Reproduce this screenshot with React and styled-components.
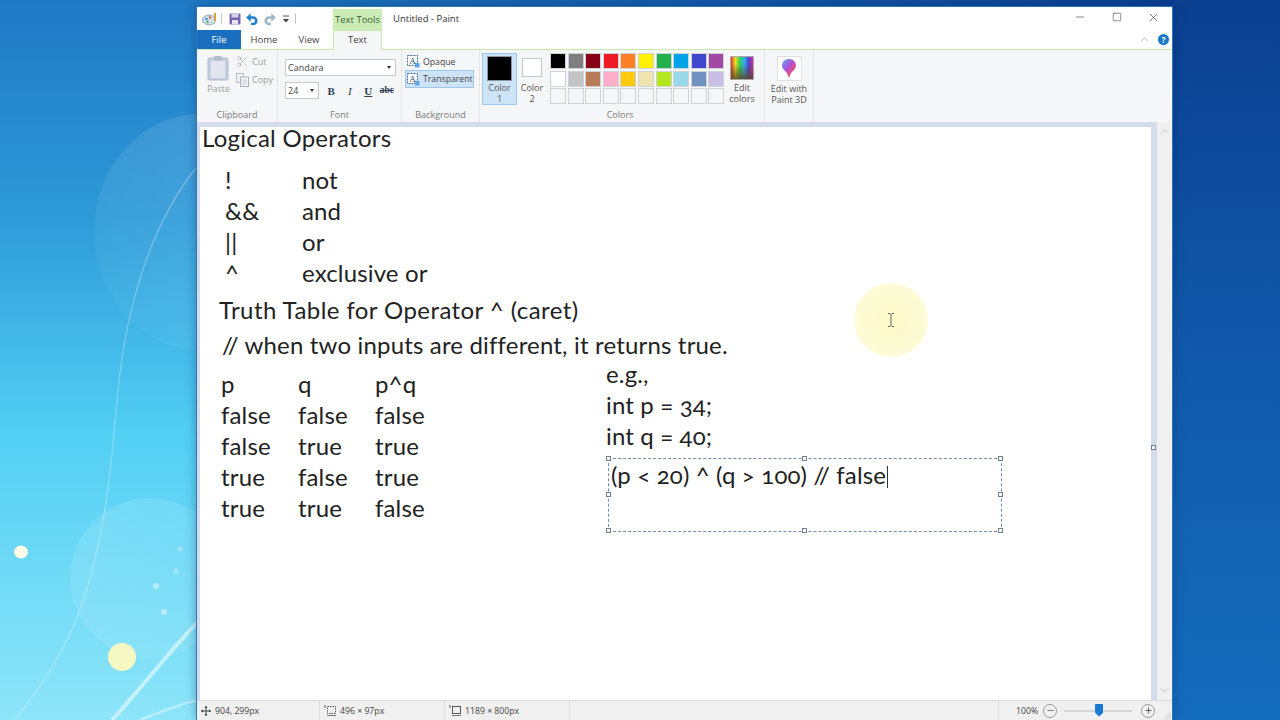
import React from "react";
import styled, { createGlobalStyle } from "styled-components";
import { ChevronDown, ChevronUp, Minus, Plus, Scissors, Square, X } from "lucide-react";

const GlobalStyle = createGlobalStyle`
  html, body {
    margin: 0;
    padding: 0;
    height: 100%;
    overflow: hidden;
  }
  body {
    font-family: "Open Sans", "Liberation Sans", sans-serif;
    color: #3c3c3c;
  }
`;

const row1 = ["#000000", "#7f7f7f", "#880015", "#ed1c24", "#ff7f27", "#fff200", "#22b14c", "#00a2e8", "#3f48cc", "#a349a4"];
const row2 = ["#ffffff", "#c3c3c3", "#b97a57", "#ffaec9", "#ffc90e", "#efe4b0", "#b5e61d", "#99d9ea", "#7092be", "#c8bfe7"];
const row3 = Array(10).fill("transparent");

const truthRows = [
  ["p", "q", "p^q"],
  ["false", "false", "false"],
  ["false", "true", "true"],
  ["true", "false", "true"],
  ["true", "true", "false"],
];

const operators = [
  ["!", "not"],
  ["&&", "and"],
  ["||", "or"],
  ["^", "exclusive or"],
];

const handles = [
  [0, 0], [50, 0], [100, 0],
  [0, 50], [100, 50],
  [0, 100], [50, 100], [100, 100],
];

export default function App() {
  return (
    <Desktop>
      <GlobalStyle />
      <Wallpaper />
      <Window>
        <TitleRow>
          <QuickBar>
            <PaintLogo />
            <QuickSep />
            <SaveIcon />
            <ArrowIcon color="#1f7fd0" />
            <ArrowIcon color="#9db4c8" flip />
            <DropIcon />
            <QuickSep $end />
          </QuickBar>
          <ContextTab>Text Tools</ContextTab>
          <DocTitle>Untitled - Paint</DocTitle>
          <WinButtons>
            <WinButton><Minus size={12} strokeWidth={1.2} /></WinButton>
            <WinButton><Square size={10} strokeWidth={1.3} /></WinButton>
            <WinButton><X size={13} strokeWidth={1.2} /></WinButton>
          </WinButtons>
        </TitleRow>

        <TabRow>
          <FileTab>File</FileTab>
          <Tab $w={46}>Home</Tab>
          <Tab $w={44}>View</Tab>
          <ActiveTab>Text</ActiveTab>
          <TabEnd>
            <ChevronUp size={13} strokeWidth={1.3} color="#9a9a9a" />
            <HelpDot>?</HelpDot>
          </TabEnd>
        </TabRow>

        <Ribbon>
          <Group $w={81}>
            <GroupBody>
              <PasteButton>
                <PasteIcon />
                <Faded>Paste</Faded>
              </PasteButton>
              <ClipColumn>
                <ClipItem><Scissors size={13} strokeWidth={1.2} color="#a8a8a8" /><Faded>Cut</Faded></ClipItem>
                <ClipItem><CopyIcon /><Faded>Copy</Faded></ClipItem>
              </ClipColumn>
            </GroupBody>
            <GroupLabel>Clipboard</GroupLabel>
          </Group>

          <Group $w={124}>
            <FontBody>
              <FontSelect $w={111}>Candara<Caret /></FontSelect>
              <FontRow>
                <FontSelect $w={34}>24<Caret /></FontSelect>
                <FontToggles>
                  <Toggle $bold>B</Toggle>
                  <Toggle $italic>I</Toggle>
                  <Toggle $under>U</Toggle>
                  <Toggle $strike>abc</Toggle>
                </FontToggles>
              </FontRow>
            </FontBody>
            <GroupLabel>Font</GroupLabel>
          </Group>

          <Group $w={78}>
            <BackgroundBody>
              <BackItem><BackIcon />Opaque</BackItem>
              <BackItem $active><BackIcon />Transparent</BackItem>
            </BackgroundBody>
            <GroupLabel>Background</GroupLabel>
          </Group>

          <Group $w={285}>
            <ColorsBody>
              <ColorButton $active>
                <BigSwatch $c="#000" />
                <small>Color<br />1</small>
              </ColorButton>
              <ColorButton>
                <MidSwatch $c="#fff" />
                <small>Color<br />2</small>
              </ColorButton>
              <Palette>
                {[...row1, ...row2, ...row3].map((c, i) => (
                  <PaletteCell key={i} $c={c} />
                ))}
              </Palette>
              <EditColors>
                <RainbowSwatch />
                <small>Edit<br />colors</small>
              </EditColors>
            </ColorsBody>
            <GroupLabel $shift={4}>Colors</GroupLabel>
          </Group>

          <Group $w={49}>
            <Paint3D>
              <DropTile>
                <svg width="16" height="22" viewBox="0 0 16 22">
                  <defs>
                    <linearGradient id="dropFill" x1="0" y1="0" x2="1" y2="1">
                      <stop offset="0" stopColor="#5aa9f0" />
                      <stop offset="0.45" stopColor="#b050d8" />
                      <stop offset="0.75" stopColor="#f0506a" />
                      <stop offset="1" stopColor="#f8b020" />
                    </linearGradient>
                  </defs>
                  <path d="M8 1C3.6 1 1 4.2 1 7.6c0 3.8 3.6 5.2 5.4 8.4L8 20l1.6-4c1.8-3.2 5.4-4.6 5.4-8.4C15 4.2 12.4 1 8 1z" fill="url(#dropFill)" />
                </svg>
              </DropTile>
              <small>Edit with<br />Paint 3D</small>
            </Paint3D>
          </Group>
        </Ribbon>

        <Workspace>
          <Canvas>
            <Block $x={2} $y={-5} $track={0.25}>Logical Operators</Block>

            <Block $x={25} $y={37}>
              {operators.map(([sym, word]) => (
                <OperatorRow key={word}>
                  <span>{sym}</span>
                  <span>{word}</span>
                </OperatorRow>
              ))}
            </Block>

            <Block $x={19} $y={167} $track={0.42}>Truth Table for Operator ^ (caret)</Block>
            <Block $x={22} $y={202} $track={0.17}>// when two inputs are different, it returns true.</Block>

            <Block $x={21} $y={241}>
              {truthRows.map((r, i) => (
                <TruthRow key={i}>
                  {r.map((cell, j) => <span key={j}>{cell}</span>)}
                </TruthRow>
              ))}
            </Block>

            <Block $x={406} $y={231}>
              <div>e.g.,</div>
              <div>int p = 34;</div>
              <div>int q = 40;</div>
            </Block>

            <Selection>
              <SelectionText>(p &lt; 20) ^ (q &gt; 100) // false<TextCaret /></SelectionText>
              {handles.map(([x, y]) => (
                <Handle key={`${x}-${y}`} $x={x} $y={y} />
              ))}
            </Selection>

            <CursorHalo>
              <svg width="8" height="14" viewBox="0 0 8 14">
                <path d="M1 .5h2l1 1 1-1h2M4 1.5v11M1 13.5h2l1-1 1 1h2" fill="none" stroke="#666" strokeWidth="1" />
              </svg>
            </CursorHalo>
            <ResizeHandle />
          </Canvas>
          <Scrollbar>
            <ChevronUp size={13} strokeWidth={1.3} color="#b5b5b5" />
            <ChevronDown size={13} strokeWidth={1.3} color="#b5b5b5" />
          </Scrollbar>
        </Workspace>

        <StatusBar>
          <StatusCell $w={123}><MoveIcon />904, 299px</StatusCell>
          <StatusCell $w={125}><SelectIcon $dashed />496 × 97px</StatusCell>
          <StatusCell $w={125}><SelectIcon />1189 × 800px</StatusCell>
          <StatusGap />
          <ZoomCell>
            <span>100%</span>
            <ZoomRound><Minus size={9} strokeWidth={2} /></ZoomRound>
            <ZoomTrack><ZoomThumb /></ZoomTrack>
            <ZoomRound><Plus size={9} strokeWidth={2.4} /></ZoomRound>
            <GripIcon />
          </ZoomCell>
        </StatusBar>
      </Window>
    </Desktop>
  );
}

function Wallpaper() {
  return (
    <WallpaperSvg viewBox="0 0 1280 720" preserveAspectRatio="none">
      <defs>
        <linearGradient id="skyLeft" x1="0" y1="0" x2="0" y2="1">
          <stop offset="0" stopColor="#1f78c4" />
          <stop offset="0.3" stopColor="#2d9ad8" />
          <stop offset="0.6" stopColor="#52cff4" />
          <stop offset="1" stopColor="#8de5f9" />
        </linearGradient>
        <linearGradient id="skyRight" x1="0" y1="0" x2="0" y2="1">
          <stop offset="0" stopColor="#0b3f90" />
          <stop offset="0.5" stopColor="#1159ab" />
          <stop offset="1" stopColor="#146cbc" />
        </linearGradient>
        <linearGradient id="skyTop" x1="0" y1="0" x2="1" y2="0">
          <stop offset="0" stopColor="#1f78c4" />
          <stop offset="1" stopColor="#0b3f90" />
        </linearGradient>
        <linearGradient id="bubble" x1="1" y1="0" x2="0" y2="1">
          <stop offset="0" stopColor="#fff" stopOpacity="0.15" />
          <stop offset="0.7" stopColor="#fff" stopOpacity="0.06" />
          <stop offset="1" stopColor="#fff" stopOpacity="0" />
        </linearGradient>
        <linearGradient id="bubbleLow" x1="0" y1="0" x2="1" y2="1">
          <stop offset="0" stopColor="#fff" stopOpacity="0.13" />
          <stop offset="1" stopColor="#fff" stopOpacity="0.05" />
        </linearGradient>
      </defs>
      <rect x="0" y="0" width="640" height="720" fill="url(#skyLeft)" />
      <rect x="640" y="0" width="640" height="720" fill="url(#skyRight)" />
      <rect x="196" y="0" width="977" height="8" fill="url(#skyTop)" />
      <ellipse cx="200" cy="232" rx="106" ry="118" fill="url(#bubble)" />
      <circle cx="150" cy="578" r="80" fill="url(#bubbleLow)" />
      <path d="M196 168C150 225 125 310 117 400C111 470 105 540 80 610C65 650 40 690 14 720" fill="none" stroke="#fff" strokeOpacity="0.3" strokeWidth="1.2" />
      <path d="M112 720C140 690 170 650 198 622" fill="none" stroke="#fff" strokeOpacity="0.5" strokeWidth="4" />
      <path d="M140 720C160 712 180 704 198 700" fill="none" stroke="#fff" strokeOpacity="0.4" strokeWidth="2.5" />
      <ellipse cx="21" cy="552" rx="7" ry="6.5" fill="#fdfde8" />
      <ellipse cx="122" cy="657" rx="14" ry="14" fill="#f6f8c4" />
      <circle cx="180" cy="549" r="2.5" fill="#fff" fillOpacity="0.3" />
      <circle cx="176" cy="571" r="2.5" fill="#fff" fillOpacity="0.3" />
      <circle cx="156" cy="586" r="3" fill="#fff" fillOpacity="0.45" />
      <circle cx="164" cy="612" r="3" fill="#fff" fillOpacity="0.45" />
    </WallpaperSvg>
  );
}

function PaintLogo() {
  return (
    <svg width="16" height="14" viewBox="0 0 16 14">
      <ellipse cx="7" cy="8" rx="6.5" ry="5" fill="#cfe0ea" stroke="#7d95a8" strokeWidth="0.8" />
      <circle cx="4.5" cy="7" r="1.3" fill="#3a8fd8" />
      <circle cx="8" cy="5.5" r="1.2" fill="#e85a3a" />
      <circle cx="5.5" cy="10" r="1.2" fill="#5ab04a" />
      <path d="M13 1v8" stroke="#d8a040" strokeWidth="2" />
    </svg>
  );
}

function SaveIcon() {
  return (
    <svg width="12" height="12" viewBox="0 0 12 12">
      <rect x="0.5" y="0.5" width="11" height="11" rx="1" fill="#7a64b0" />
      <rect x="2.5" y="0.5" width="7" height="4" fill="#d8d2e8" />
      <rect x="3" y="7" width="6" height="4.5" fill="#e6e2f0" />
    </svg>
  );
}

function ArrowIcon({ color, flip }) {
  return (
    <ArrowSvg width="12" height="12" viewBox="0 0 12 12" $flip={flip}>
      <path d="M2 4.5h5a3.2 3.2 0 0 1 0 6.5H5" fill="none" stroke={color} strokeWidth="2.6" />
      <path d="M4.6 .2 .2 4.5l4.4 4.3z" fill={color} />
    </ArrowSvg>
  );
}

function DropIcon() {
  return (
    <svg width="8" height="8" viewBox="0 0 8 8">
      <path d="M1 1h6" stroke="#555" strokeWidth="1" />
      <path d="M1 4h6L4 7.5z" fill="#444" />
    </svg>
  );
}

function PasteIcon() {
  return (
    <svg width="22" height="26" viewBox="0 0 22 26">
      <rect x="1" y="3" width="20" height="22" rx="1.5" fill="#c4cfe0" stroke="#aeb9cc" />
      <rect x="4" y="6" width="14" height="17" fill="#e3e6ee" />
      <rect x="7" y="1" width="8" height="5" rx="1" fill="#b4bfd2" />
    </svg>
  );
}

function CopyIcon() {
  return (
    <svg width="13" height="14" viewBox="0 0 13 14">
      <rect x="0.5" y="0.5" width="7" height="9" fill="#eef0f4" stroke="#b8c0cc" />
      <rect x="4.5" y="4" width="8" height="9.5" fill="#f4f5f8" stroke="#a8b2c0" />
      <path d="M6 7h5M6 9h5M6 11h5" stroke="#bcc4d0" strokeWidth="0.8" />
    </svg>
  );
}

function BackIcon() {
  return (
    <svg width="13" height="13" viewBox="0 0 13 13">
      <rect x="0.5" y="0.5" width="10" height="10" fill="#fff" stroke="#4a6d94" strokeDasharray="2 1" />
      <rect x="8" y="8" width="4.5" height="4.5" fill="#5aa8e8" />
      <text x="5.5" y="8.6" fontSize="9" fontFamily="Liberation Serif, serif" textAnchor="middle" fill="#2b4a6b">A</text>
    </svg>
  );
}

function MoveIcon() {
  return (
    <svg width="10" height="10" viewBox="0 0 10 10">
      <path d="M5 0v10M0 5h10" stroke="#444" strokeWidth="1" />
      <path d="M5 0 3.5 2h3zM5 10 3.5 8h3zM0 5l2-1.5v3zM10 5 8 3.5v3z" fill="#444" />
    </svg>
  );
}

function SelectIcon({ $dashed }) {
  return (
    <svg width="12" height="11" viewBox="0 0 12 11">
      <path d="M1 0v3" stroke="#555" strokeWidth="1" />
      <rect x="3.5" y="1.5" width="8" height="7" fill="none" stroke="#555" strokeWidth="1" strokeDasharray={$dashed ? "1.5 1" : "none"} />
      <path d="M3 10.5h9" stroke="#777" strokeWidth="1" />
    </svg>
  );
}

function GripIcon() {
  return (
    <GripSvg width="8" height="8" viewBox="0 0 8 8">
      <path d="M7 1v1M5 3v1M7 3v1M3 5v1M5 5v1M7 5v1M1 7v1M3 7v1M5 7v1M7 7v1" stroke="#b8b8b8" strokeWidth="1" />
    </GripSvg>
  );
}

const Desktop = styled.div`
  position: relative;
  width: 1280px;
  height: 720px;
  overflow: hidden;
  padding: 6px 0 0 196px;
  box-sizing: border-box;
  background: #1c6fb8;
`;

const WallpaperSvg = styled.svg`
  position: absolute;
  inset: 0;
  width: 1280px;
  height: 720px;
`;

const Window = styled.div`
  position: relative;
  width: 977px;
  height: 714px;
  box-sizing: border-box;
  border: 1px solid #2f78b8;
  border-bottom: 0;
  background: #fff;
  display: flex;
  flex-direction: column;
  box-shadow: 0 0 10px rgba(0, 30, 80, 0.35);
`;

const TitleRow = styled.div`
  height: 23px;
  display: flex;
  align-items: flex-end;
  flex: none;
`;

const QuickBar = styled.div`
  width: 136px;
  height: 23px;
  padding-left: 5px;
  box-sizing: border-box;
  display: flex;
  align-items: center;
  gap: 5px;
`;

const QuickSep = styled.i`
  width: 1px;
  height: 11px;
  margin: ${(p) => (p.$end ? "0" : "0 2px 0 -2px")};
  background: #c4c4c4;
`;

const ArrowSvg = styled.svg`
  margin-right: 1px;
  transform: ${(p) => (p.$flip ? "scaleX(-1)" : "none")};
`;

const ContextTab = styled.div`
  width: 49px;
  height: 21px;
  background: #c9edb4;
  font-size: 9.5px;
  line-height: 22px;
  text-align: center;
  color: #40603a;
`;

const DocTitle = styled.div`
  margin-left: 11px;
  height: 23px;
  font-size: 9.5px;
  line-height: 23px;
  color: #333;
`;

const WinButtons = styled.div`
  margin-left: auto;
  height: 23px;
  display: flex;
  align-items: flex-start;
`;

const WinButton = styled.div`
  width: 37px;
  height: 20px;
  display: flex;
  align-items: center;
  justify-content: center;
  color: #333;
`;

const TabRow = styled.div`
  height: 20px;
  flex: none;
  display: flex;
  box-sizing: border-box;
  border-bottom: 1px solid #c8e8ae;
`;

const FileTab = styled.div`
  width: 44px;
  height: 19px;
  background: #1a6ec0;
  color: #fff;
  font-size: 9.5px;
  line-height: 19px;
  text-align: center;
`;

const Tab = styled.div`
  width: ${(p) => p.$w}px;
  font-size: 9.5px;
  line-height: 19px;
  text-align: center;
  color: #444;
`;

const ActiveTab = styled.div`
  width: 49px;
  height: 20px;
  box-sizing: border-box;
  margin-left: 2px;
  background: #f5f6f7;
  border: 1px solid #c8e8ae;
  border-bottom: 0;
  font-size: 9.5px;
  line-height: 18px;
  text-align: center;
  color: #444;
`;

const TabEnd = styled.div`
  margin-left: auto;
  display: flex;
  align-items: center;
  gap: 7px;
  padding-right: 3px;
`;

const HelpDot = styled.div`
  width: 11px;
  height: 11px;
  border-radius: 50%;
  background: #1a78c8;
  color: #fff;
  font-size: 8.5px;
  font-weight: 700;
  line-height: 11px;
  text-align: center;
`;

const Ribbon = styled.div`
  height: 72px;
  flex: none;
  display: flex;
  background: #f5f6f7;
`;

const Group = styled.div`
  width: ${(p) => p.$w}px;
  box-sizing: border-box;
  border-right: 1px solid #e4e5e7;
  display: flex;
  flex-direction: column;
`;

const GroupBody = styled.div`
  flex: 1;
  display: flex;
  padding: 5px 0 0 10px;
  gap: 6px;
`;

const GroupLabel = styled.div`
  height: 16px;
  padding-right: ${(p) => p.$shift || 0}px;
  font-size: 9px;
  line-height: 18px;
  text-align: center;
  color: #7a7a7a;
`;

const Faded = styled.span`
  color: #a0a0a0;
  font-size: 9px;
`;

const PasteButton = styled.div`
  display: flex;
  flex-direction: column;
  align-items: center;
  gap: 1px;
`;

const ClipColumn = styled.div`
  display: flex;
  flex-direction: column;
  gap: 3px;
  margin-top: -1px;
`;

const ClipItem = styled.div`
  height: 15px;
  display: flex;
  align-items: center;
  gap: 3px;
`;

const FontBody = styled.div`
  flex: 1;
  display: flex;
  flex-direction: column;
  gap: 6px;
  padding: 9px 0 0 7px;
`;

const FontRow = styled.div`
  display: flex;
  align-items: center;
`;

const FontSelect = styled.div`
  position: relative;
  width: ${(p) => p.$w}px;
  height: 17px;
  box-sizing: border-box;
  border: 1px solid #c9c9c9;
  background: #fff;
  padding-left: 2px;
  font-size: 9px;
  line-height: 15px;
  color: #444;
`;

const Caret = styled.i`
  position: absolute;
  right: 4px;
  top: 6px;
  border: 2.5px solid transparent;
  border-top: 3px solid #333;
  border-bottom: 0;
`;

const FontToggles = styled.div`
  display: flex;
  margin-left: 3px;
`;

const Toggle = styled.div`
  width: 18.5px;
  text-align: center;
  font-family: "Liberation Serif", serif;
  font-size: ${(p) => (p.$strike ? "9.5px" : "11px")};
  font-weight: ${(p) => (p.$italic ? 400 : 700)};
  font-style: ${(p) => (p.$italic ? "italic" : "normal")};
  text-decoration: ${(p) => (p.$under ? "underline" : p.$strike ? "line-through" : "none")};
  color: #2f3f55;
`;

const BackgroundBody = styled.div`
  flex: 1;
  padding: 3px 0 0 3px;
  display: flex;
  flex-direction: column;
`;

const BackItem = styled.div`
  width: 69px;
  height: ${(p) => (p.$active ? 18 : 17)}px;
  box-sizing: border-box;
  padding-left: 1px;
  display: flex;
  align-items: center;
  gap: 3px;
  font-size: 8.7px;
  color: #444;
  background: ${(p) => (p.$active ? "#cde4f7" : "transparent")};
  border: 1px solid ${(p) => (p.$active ? "#9cc8ec" : "transparent")};
`;

const ColorsBody = styled.div`
  flex: 1;
  display: flex;
  padding: 3px 0 0 2px;

  small {
    font-size: 9px;
    line-height: 11px;
    text-align: center;
    color: #555;
  }
`;

const ColorButton = styled.div`
  width: ${(p) => (p.$active ? 35 : 30)}px;
  height: 52px;
  box-sizing: border-box;
  display: flex;
  flex-direction: column;
  align-items: center;
  background: ${(p) => (p.$active ? "#cde4f7" : "transparent")};
  border: 1px solid ${(p) => (p.$active ? "#9cc8ec" : "transparent")};
`;

const BigSwatch = styled.div`
  width: 25px;
  height: 26px;
  margin: 2px 0 1px;
  box-sizing: border-box;
  background: ${(p) => p.$c};
  border: 1px solid #8a94a3;
`;

const MidSwatch = styled.div`
  width: 20px;
  height: 20px;
  margin: 4px 0 5px;
  box-sizing: border-box;
  background: ${(p) => p.$c};
  border: 1px solid #c3c6cb;
`;

const Palette = styled.div`
  margin-left: 3px;
  width: 177px;
  height: 53px;
  display: grid;
  grid-template-columns: repeat(10, 16px);
  grid-auto-rows: 16px;
  gap: 1.6px;
`;

const PaletteCell = styled.div`
  box-sizing: border-box;
  background: ${(p) => p.$c};
  border: 1px solid #cfd2d6;
`;

const EditColors = styled.div`
  width: 30px;
  display: flex;
  flex-direction: column;
  align-items: center;
`;

const RainbowSwatch = styled.div`
  width: 24px;
  height: 24px;
  margin: 3px 0 2px;
  box-sizing: border-box;
  border: 1px solid #a8a8a8;
  background:
    linear-gradient(to bottom, rgba(255, 255, 255, 0) 30%, rgba(90, 70, 40, 0.85) 100%),
    linear-gradient(to right, #e03030, #f0e020, #30d050, #30b0f0, #5040d0, #d030a0);
`;

const Paint3D = styled.div`
  flex: 1;
  display: flex;
  flex-direction: column;
  align-items: center;
  padding-top: 6px;

  small {
    font-size: 9px;
    line-height: 11px;
    text-align: center;
    color: #555;
    white-space: nowrap;
  }
`;

const DropTile = styled.div`
  width: 23px;
  height: 23px;
  margin-bottom: 2px;
  background: #fff;
  border: 1px solid #e0e0e0;
  display: flex;
  align-items: center;
  justify-content: center;
`;

const Workspace = styled.div`
  flex: 1;
  min-height: 0;
  display: flex;
  background: linear-gradient(to right, #d4dbea calc(100% - 15px), #bcc7d9 calc(100% - 15px));
  padding: 5px 0 0 3px;
`;

const Canvas = styled.div`
  position: relative;
  width: 952px;
  margin-right: 6px;
  background: #fff;
  font-family: Lato, "Open Sans", sans-serif;
  font-size: 24px;
  line-height: 31px;
  letter-spacing: 0.15px;
  color: #222;
  font-variant-numeric: oldstyle-nums;
`;

const Block = styled.div`
  position: absolute;
  left: ${(p) => p.$x}px;
  top: ${(p) => p.$y}px;
  letter-spacing: ${(p) => (p.$track ? `${p.$track}px` : "inherit")};
  white-space: nowrap;
`;

const OperatorRow = styled.div`
  display: grid;
  grid-template-columns: 77px auto;
`;

const TruthRow = styled.div`
  display: grid;
  grid-template-columns: 77px 77px auto;
`;

const Selection = styled.div`
  position: absolute;
  left: 408px;
  top: 331px;
  width: 394px;
  height: 74px;
  box-sizing: border-box;
  border: 1px dashed #6f8fb0;
`;

const SelectionText = styled.div`
  position: absolute;
  left: 2px;
  top: 0;
  letter-spacing: 0.15px;
  white-space: nowrap;
`;

const TextCaret = styled.i`
  display: inline-block;
  width: 1px;
  height: 22px;
  margin-left: 1px;
  background: #333;
  vertical-align: -4px;
`;

const Handle = styled.i`
  position: absolute;
  left: ${(p) => p.$x}%;
  top: ${(p) => p.$y}%;
  width: 3px;
  height: 3px;
  margin: -3px 0 0 -3px;
  background: #fff;
  border: 1px solid #6f7f8f;
`;

const CursorHalo = styled.div`
  position: absolute;
  left: 654px;
  top: 156px;
  width: 74px;
  height: 74px;
  border-radius: 50%;
  background: radial-gradient(circle, #fcf9c8 0%, #fdfbd4 60%, #fffee8 100%);
  display: flex;
  align-items: center;
  justify-content: center;
`;

const ResizeHandle = styled.i`
  position: absolute;
  left: 951px;
  top: 318px;
  width: 3px;
  height: 3px;
  background: #fff;
  border: 1px solid #6f7f8f;
`;

const Scrollbar = styled.div`
  width: 15px;
  margin-top: -5px;
  background: #f0f0f0;
  display: flex;
  flex-direction: column;
  align-items: center;
  justify-content: space-between;
  padding: 3px 0;
`;

const StatusBar = styled.div`
  height: 20px;
  flex: none;
  display: flex;
  background: #f0f0f0;
  border-top: 1px solid #dcdcdc;
  box-sizing: border-box;
  font-size: 8.7px;
  color: #444;
`;

const StatusCell = styled.div`
  width: ${(p) => p.$w}px;
  box-sizing: border-box;
  border-right: 1px solid #dedede;
  padding-left: 4px;
  display: flex;
  align-items: center;
  gap: 4px;
`;

const StatusGap = styled.div`
  width: 428px;
  border-right: 1px solid #dedede;
`;

const ZoomCell = styled.div`
  position: relative;
  flex: 1;
  display: flex;
  align-items: center;
  padding-left: 17px;
  gap: 5px;
`;

const ZoomRound = styled.div`
  width: 12px;
  height: 12px;
  border-radius: 50%;
  border: 1px solid #9a9a9a;
  display: flex;
  align-items: center;
  justify-content: center;
  color: #555;
`;

const ZoomTrack = styled.div`
  position: relative;
  width: 68px;
  height: 2px;
  margin: 0 4px 0 2px;
  background: #d6d6d6;
`;

const ZoomThumb = styled.i`
  position: absolute;
  left: 31px;
  top: -6px;
  width: 8px;
  height: 13px;
  background: #1a78d0;
  clip-path: polygon(0 0, 100% 0, 100% 72%, 50% 100%, 0 72%);
`;

const GripSvg = styled.svg`
  position: absolute;
  right: 1px;
  bottom: 1px;
`;
